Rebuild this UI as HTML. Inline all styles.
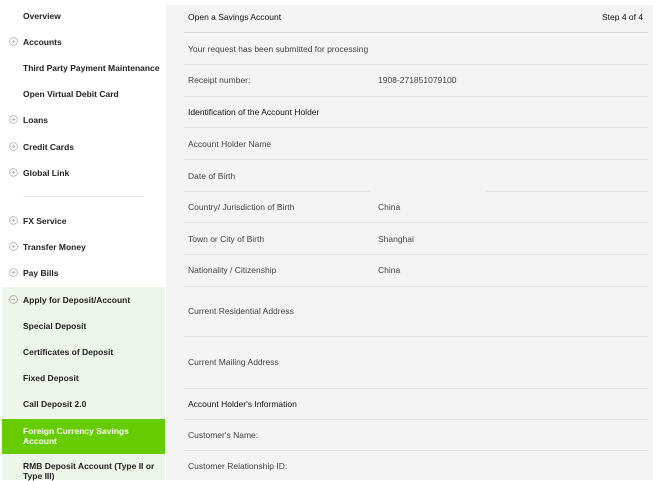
<!DOCTYPE html>
<html><head><meta charset="utf-8"><style>
*{margin:0;padding:0;box-sizing:border-box}
body{width:653px;height:480px;overflow:hidden;background:#fff;font-family:"Liberation Sans",Arial,sans-serif;position:relative}
.side{position:absolute;left:2px;top:0;width:163px;height:480px;background:#fff}
.green{position:absolute;left:2px;top:287px;width:163px;height:193px;background:#eef5ea}
.si{position:absolute;left:23px;font-size:8.5px;font-weight:bold;color:#222;line-height:10px}
.ic{position:absolute;left:9px;width:9px;height:9px}
.hl{position:absolute;left:2px;top:419px;width:163px;height:35px;background:#66cc00}
.panel{position:absolute;left:166px;top:5px;width:487px;height:475px;background:#f4f4f4}
.t{position:absolute;font-size:8.5px;color:#444;line-height:10px}
.b{color:#111}
.ln{position:absolute;height:1px;background:#e4e4e4}
</style></head><body>
<div class="side"></div>
<div class="green"></div>
<div class="hl"></div>
<div style="position:absolute;left:23px;top:196px;width:121px;height:1px;background:#e6e6e6"></div>

<div class="si" style="top:11px">Overview</div>
<div class="si" style="top:37px">Accounts</div>
<div class="si" style="top:63px">Third Party Payment Maintenance</div>
<div class="si" style="top:89px">Open Virtual Debit Card</div>
<div class="si" style="top:115px">Loans</div>
<div class="si" style="top:142px">Credit Cards</div>
<div class="si" style="top:168px">Global Link</div>
<div class="si" style="top:216px">FX Service</div>
<div class="si" style="top:242px">Transfer Money</div>
<div class="si" style="top:268px">Pay Bills</div>
<div class="si" style="top:295px">Apply for Deposit/Account</div>
<div class="si" style="top:321px">Special Deposit</div>
<div class="si" style="top:347px">Certificates of Deposit</div>
<div class="si" style="top:373px">Fixed Deposit</div>
<div class="si" style="top:399px">Call Deposit 2.0</div>
<div class="si" style="top:426px;color:#fff">Foreign Currency Savings<br>Account</div>
<div class="si" style="top:461px">RMB Deposit Account (Type II or<br>Type III)</div>

<svg class="ic" style="top:37px" viewBox="0 0 10 10"><circle cx="5" cy="5" r="4.3" fill="none" stroke="#aaa" stroke-width=".8"/><path d="M3 5h4M5 3v4" stroke="#aaa" stroke-width=".8"/></svg>
<svg class="ic" style="top:115px" viewBox="0 0 10 10"><circle cx="5" cy="5" r="4.3" fill="none" stroke="#aaa" stroke-width=".8"/><path d="M3 5h4M5 3v4" stroke="#aaa" stroke-width=".8"/></svg>
<svg class="ic" style="top:142px" viewBox="0 0 10 10"><circle cx="5" cy="5" r="4.3" fill="none" stroke="#aaa" stroke-width=".8"/><path d="M3 5h4M5 3v4" stroke="#aaa" stroke-width=".8"/></svg>
<svg class="ic" style="top:168px" viewBox="0 0 10 10"><circle cx="5" cy="5" r="4.3" fill="none" stroke="#aaa" stroke-width=".8"/><path d="M3 5h4M5 3v4" stroke="#aaa" stroke-width=".8"/></svg>
<svg class="ic" style="top:216px" viewBox="0 0 10 10"><circle cx="5" cy="5" r="4.3" fill="none" stroke="#aaa" stroke-width=".8"/><path d="M3 5h4M5 3v4" stroke="#aaa" stroke-width=".8"/></svg>
<svg class="ic" style="top:242px" viewBox="0 0 10 10"><circle cx="5" cy="5" r="4.3" fill="none" stroke="#aaa" stroke-width=".8"/><path d="M3 5h4M5 3v4" stroke="#aaa" stroke-width=".8"/></svg>
<svg class="ic" style="top:268px" viewBox="0 0 10 10"><circle cx="5" cy="5" r="4.3" fill="none" stroke="#aaa" stroke-width=".8"/><path d="M3 5h4M5 3v4" stroke="#aaa" stroke-width=".8"/></svg>
<svg class="ic" style="top:295px" viewBox="0 0 10 10"><circle cx="5" cy="5" r="4.3" fill="none" stroke="#999" stroke-width=".8"/><path d="M3 5h4" stroke="#999" stroke-width=".8"/></svg>

<div class="panel"></div>
<div class="t b" style="left:188px;top:12px">Open a Savings Account</div>
<div class="t b" style="left:602px;top:12px">Step 4 of 4</div>
<div class="ln" style="left:184px;top:32px;width:464px;background:#d8d8d8"></div>

<div class="t" style="left:188px;top:44px">Your request has been submitted for processing</div>
<div class="ln" style="left:184px;top:64px;width:464px"></div>
<div class="t" style="left:188px;top:75px">Receipt number:</div>
<div class="t" style="left:378px;top:75px">1908-271851079100</div>
<div class="ln" style="left:184px;top:96px;width:464px"></div>
<div class="t b" style="left:188px;top:107px">Identification of the Account Holder</div>
<div class="ln" style="left:184px;top:127px;width:464px"></div>
<div class="t" style="left:188px;top:139px">Account Holder Name</div>
<div class="ln" style="left:184px;top:159px;width:464px"></div>
<div class="t" style="left:188px;top:171px">Date of Birth</div>
<div class="ln" style="left:184px;top:191px;width:186px"></div>
<div class="ln" style="left:486px;top:191px;width:162px"></div>
<div class="t" style="left:188px;top:202px">Country/ Jurisdiction of Birth</div>
<div class="t" style="left:378px;top:202px">China</div>
<div class="ln" style="left:184px;top:222px;width:464px"></div>
<div class="t" style="left:188px;top:234px">Town or City of Birth</div>
<div class="t" style="left:378px;top:234px">Shanghai</div>
<div class="ln" style="left:184px;top:254px;width:464px"></div>
<div class="t" style="left:188px;top:265px">Nationality / Citizenship</div>
<div class="t" style="left:378px;top:265px">China</div>
<div class="ln" style="left:184px;top:286px;width:464px"></div>
<div class="t" style="left:188px;top:306px">Current Residential Address</div>
<div class="ln" style="left:184px;top:336px;width:464px"></div>
<div class="t" style="left:188px;top:357px">Current Mailing Address</div>
<div class="ln" style="left:184px;top:388px;width:464px"></div>
<div class="t b" style="left:188px;top:399px">Account Holder's Information</div>
<div class="ln" style="left:184px;top:419px;width:464px"></div>
<div class="t" style="left:188px;top:430px">Customer's Name:</div>
<div class="ln" style="left:184px;top:450px;width:464px"></div>
<div class="t" style="left:188px;top:461px">Customer Relationship ID:</div>
</body></html>
